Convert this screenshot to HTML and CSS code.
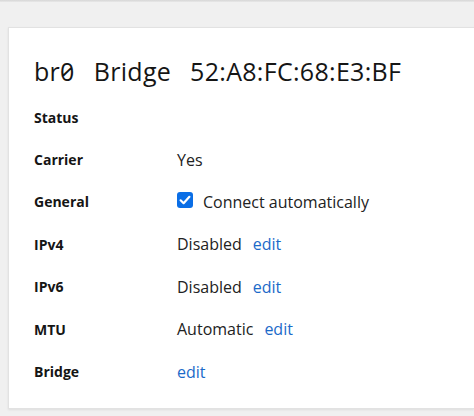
FILE: index.html
```html
<!DOCTYPE html>
<html lang="en">
<head>
<meta charset="utf-8">
<title>br0 Bridge</title>
<link rel="stylesheet" href="styles.css">
</head>
<body>
<div class="topbar"></div>
<main class="page">
  <section class="card">
    <h1 class="title">
      <span class="name">br0</span>
      <span>Bridge</span>
      <span>52:A8:FC:68:E3:BF</span>
    </h1>
    <div class="details">
      <div class="row"><div class="label">Status</div><div class="value"></div></div>
      <div class="row"><div class="label">Carrier</div><div class="value">Yes</div></div>
      <div class="row row-check">
        <div class="label">General</div>
        <div class="value">
          <label class="check">
            <span class="box"><svg viewBox="0 0 16 16" width="16" height="16"><path d="M3.6 8.3 L6.6 11.2 L12.4 4.8" fill="none" stroke="#fff" stroke-width="2.2" stroke-linecap="round" stroke-linejoin="round"/></svg></span>
            <span>Connect automatically</span>
          </label>
        </div>
      </div>
      <div class="row"><div class="label">IPv4</div><div class="value">Disabled <a class="link" href="#">edit</a></div></div>
      <div class="row"><div class="label">IPv6</div><div class="value">Disabled <a class="link" href="#">edit</a></div></div>
      <div class="row"><div class="label">MTU</div><div class="value">Automatic <a class="link" href="#">edit</a></div></div>
      <div class="row"><div class="label">Bridge</div><div class="value"><a class="link" href="#">edit</a></div></div>
    </div>
  </section>
</main>
</body>
</html>
```

FILE: styles.css
```css
html, body {
  margin: 0;
  padding: 0;
  overflow: hidden;
}
body {
  background: #f0f0f0;
  font-family: "Open Sans", "Noto Sans", sans-serif;
  color: #151515;
  height: 416px;
}
.topbar {
  height: 2px;
  background: linear-gradient(#d6d6d6, #e8e8e8);
}
.page {
  padding: 25px 0 0 8px;
}
.card {
  background: #fff;
  border: 1px solid #e2e2e2;
  border-right: none;
  box-shadow: 0 1px 2px rgba(0,0,0,0.08);
  padding: 28px 0 17px 25px;
  height: 335px;
}
.title {
  margin: 0;
  font-size: 25px;
  font-weight: 400;
  line-height: 30px;
  display: flex;
  gap: 19px;
  letter-spacing: 0.3px;
}
.name {
  font-feature-settings: "zero";
}
.details {
  margin-top: 10px;
}
.row {
  display: flex;
  align-items: center;
  height: 42.4px;
}
.label {
  width: 143px;
  flex: none;
  font-size: 14px;
  font-weight: 700;
}
.value {
  font-size: 16px;
  color: #222;
  display: flex;
  align-items: center;
  gap: 11px;
}
.link {
  color: #1b6ac9;
  text-decoration: none;
}
.check {
  display: flex;
  align-items: center;
  gap: 10px;
}
.box {
  width: 16px;
  height: 16px;
  border-radius: 3px;
  background: #0a6ee6;
  display: block;
  margin-top: -4px;
}
.box svg {
  display: block;
}
```
